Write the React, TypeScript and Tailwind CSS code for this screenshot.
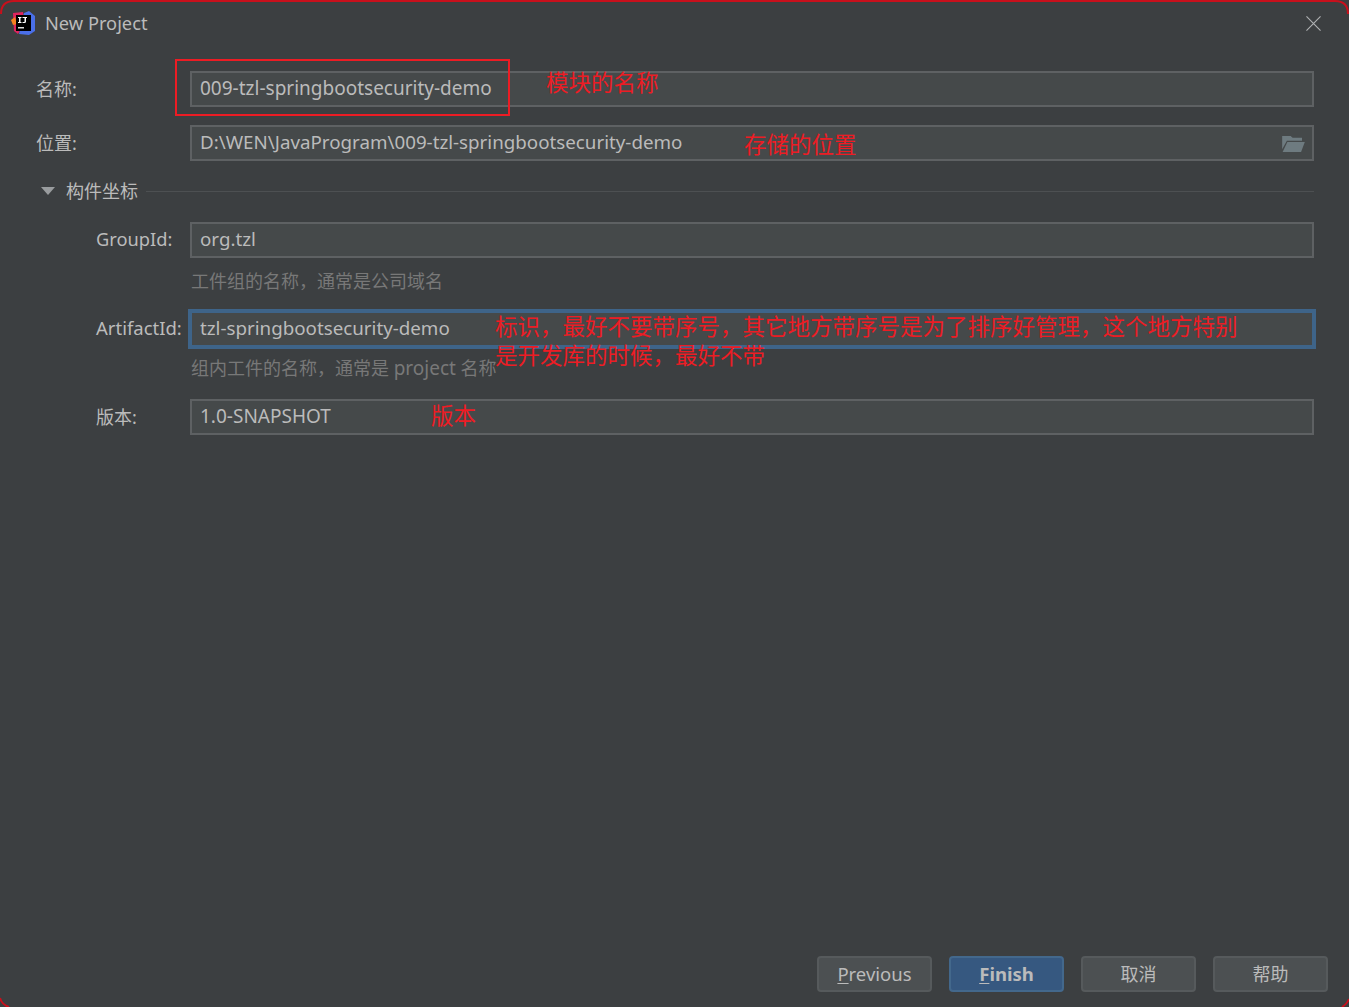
const cjk = "font-['Noto_Sans','Noto_Sans_CJK_SC',sans-serif]"
const latin = 'text-[18.75px]'

const IdeaLogo = () => (
  <svg viewBox="0 0 24 24" className="h-6 w-6 shrink-0">
    <path d="M2 2 L12 1 L14 12 L7 23 L3 20 Z" fill="#e0245e" />
    <path d="M13 2 L18 0 L24 5 L24 20 L18 24 L8 23 Z" fill="#4a6fe8" />
    <path d="M0 9 L4 6 L6 13 L2 14 Z" fill="#f58220" />
    <rect x="5" y="4" width="15" height="16" fill="#000" />
    <rect x="7" y="16" width="6" height="1.5" fill="#ddd" />
    <path d="M7 6 H10.5 V7 H9.5 V11 H10.5 V12 H7 V11 H8 V7 H7 Z M11.5 6 H16 V7 H15 V10.5 Q15 12 13.5 12 H11.5 V11 H13 Q13.5 11 13.5 10.5 V7 H11.5 Z" fill="#fff" />
  </svg>
)

const Field = ({ value, focused, wide, children }: { value: string; focused?: boolean; wide?: boolean; children?: React.ReactNode }) => (
  <div
    className={
      focused
        ? `flex h-[36px] flex-1 items-center border-2 border-[#3e6489] bg-[#45494a] pl-2 pr-[7px] text-[#bbbbbb] shadow-[0_0_0_2px_#3e6489] ${latin}`
        : `flex h-[36px] flex-1 items-center border-2 border-[#5e6163] bg-[#45494a] pl-2 pr-[7px] text-[#bbbbbb] ${latin}`
    }
  >
    <span className={wide ? 'mb-[2px] flex-1 whitespace-nowrap text-[19px]' : 'mb-[2px] flex-1 whitespace-nowrap'}>{value}</span>
    {children}
  </div>
)

const Note = ({ className, children }: { className: string; children: React.ReactNode }) => (
  <span className={`absolute whitespace-nowrap text-[22.5px] leading-[30px] text-[#ed1c24] ${className}`}>{children}</span>
)

const Btn = ({ children, primary }: { children: React.ReactNode; primary?: boolean }) => (
  <div
    className={
      primary
        ? 'flex h-[36px] w-[115px] items-center justify-center rounded-[4px] border-2 border-[#43688c] bg-[#365880] font-bold text-[#bbbbbb]'
        : 'flex h-[36px] w-[115px] items-center justify-center rounded-[4px] border-2 border-[#565a5c] bg-[#4c5052] text-[#bbbbbb]'
    }
  >
    {children}
  </div>
)

const Corner = ({ className, d }: { className: string; d: string }) => (
  <svg viewBox="0 0 14 14" className={`absolute h-[14px] w-[14px] ${className}`} fill="none" stroke="#c8101c" strokeWidth="2">
    <path d={d} />
  </svg>
)

export default function App() {
  return (
    <div className={`relative h-[1007px] w-[1349px] overflow-hidden bg-[#3c3f41] text-[18px] ${cjk}`}>
      <div className="flex h-full flex-col pt-[2px]">
        <div className="flex h-[42px] items-center pl-[11px] pr-[28px]">
          <IdeaLogo />
          <span className="ml-[10px] flex-1 text-[18.25px] text-[#bbbbbb]">New Project</span>
          <svg viewBox="0 0 16 16" className="h-[15px] w-[15px]" fill="none" stroke="#afb1b3" strokeWidth="1.2">
            <path d="M0.5 0.5 L15.5 15.5 M15.5 0.5 L0.5 15.5" />
          </svg>
        </div>

        <div className="flex flex-1 flex-col pl-[36px] pr-[35px] pt-[27px] text-[#bbbbbb]">
          <div className="flex items-center">
            <span className="w-[154px]">名称:</span>
            <Field value="009-tzl-springbootsecurity-demo" wide />
          </div>
          <div className="mt-[18px] flex items-center">
            <span className="w-[154px]">位置:</span>
            <Field value="D:\WEN\JavaProgram\009-tzl-springbootsecurity-demo">
              <svg viewBox="0 0 24 18" className="h-[17px] w-[23px] shrink-0" fill="#6e7b80">
                <path d="M0 1 H9 L11 3 H21 V6 H5 L0 15 Z" />
                <path d="M5.5 7.5 H24 L20 18 H0.5 Z" />
              </svg>
            </Field>
          </div>

          <div className="mt-[16px] flex h-[28px] items-center">
            <svg viewBox="0 0 14 8" className="ml-[5px] h-2 w-[14px]" fill="#999c9e">
              <path d="M0 0 H14 L7 8 Z" />
            </svg>
            <span className="ml-[11px]">构件坐标</span>
            <div className="ml-2 h-px flex-1 bg-[#4d5052]" />
          </div>

          <div className="mt-[17px] flex items-center pl-[60px]">
            <span className="mb-[2px] w-[94px] text-[18.25px]">GroupId:</span>
            <Field value="org.tzl" />
          </div>
          <div className="ml-[155px] mt-[8px] h-[30px] leading-[30px] text-[#787878]">工件组的名称，通常是公司域名</div>

          <div className="mt-[15px] flex items-center pl-[60px]">
            <span className="mb-[2px] w-[94px] text-[18.5px]">ArtifactId:</span>
            <Field value="tzl-springbootsecurity-demo" focused />
          </div>
          <div className="ml-[155px] mt-[6px] h-[30px] leading-[30px] text-[#787878]">
            组内工件的名称，通常是 <span className="text-[19px]">project</span> 名称
          </div>

          <div className="mt-[16px] flex items-center pl-[60px]">
            <span className="w-[94px]">版本:</span>
            <Field value="1.0-SNAPSHOT" wide />
          </div>
        </div>

        <div className="flex justify-end gap-[17px] pb-[15px] pr-[21px]">
          <Btn><span className="text-[18.5px]"><span className="underline underline-offset-2">P</span>revious</span></Btn>
          <Btn primary><span className="text-[18.5px]"><span className="underline underline-offset-2">F</span>inish</span></Btn>
          <Btn>取消</Btn>
          <Btn>帮助</Btn>
        </div>
      </div>

      <div className="absolute left-0 right-0 top-0 mx-[13px] h-[2px] bg-[#c8101c]" />
      <Corner className="left-0 top-0" d="M14 1 Q1 1 1 14" />
      <Corner className="right-0 top-0" d="M0 1 Q13 1 13 14" />
      <Corner className="bottom-0 left-0" d="M0 5 Q2 12 9 14" />
      <Corner className="bottom-0 right-0" d="M14 6 Q12 11 7 14" />

      <div className="absolute left-[175px] top-[59px] h-[57px] w-[335px] border-2 border-[#ed1c24]" />
      <Note className="left-[546px] top-[68px]">模块的名称</Note>
      <Note className="left-[744px] top-[130px]">存储的位置</Note>
      <Note className="left-[495px] top-[312px]">标识，最好不要带序号，其它地方带序号是为了排序好管理，这个地方特别</Note>
      <Note className="left-[495px] top-[341px]">是开发库的时候，最好不带</Note>
      <Note className="left-[431px] top-[401px]">版本</Note>
    </div>
  )
}
